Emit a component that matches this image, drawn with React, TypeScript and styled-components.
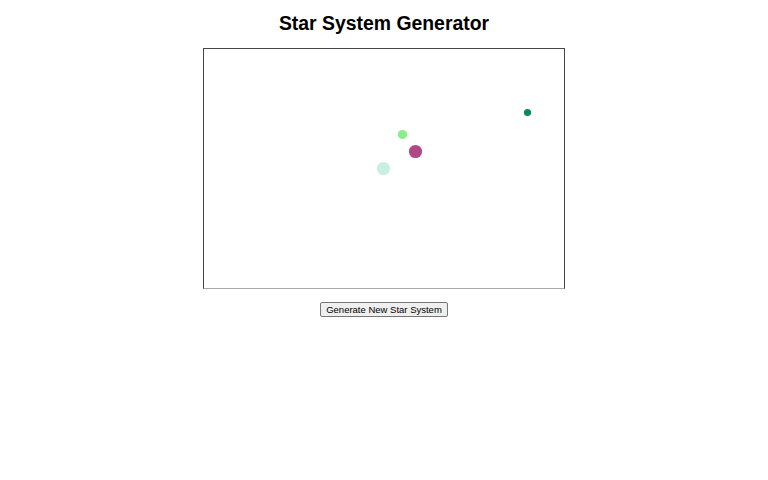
import React from "react";
import styled, { createGlobalStyle } from "styled-components";

const Global = createGlobalStyle`
  html, body { margin: 0; padding: 0; background: #fff; }
  body { font-family: "Liberation Sans", Arial, sans-serif; color: #000; }
`;

const Page = styled.div`
  display: flex;
  flex-direction: column;
  align-items: center;
`;

const Title = styled.h1`
  font-size: 19.4px;
  font-weight: bold;
  line-height: 24px;
  margin: 11px 0 13px;
`;

const Canvas = styled.div`
  width: 360px;
  height: 239px;
  border: 1px solid #444;
  border-bottom-color: #aaa;
  background: #fff;
  overflow: hidden;
`;

const Button = styled.button`
  margin-top: 13px;
  font-family: "Liberation Sans", Arial, sans-serif;
  font-size: 9.5px;
  line-height: 11px;
  padding: 1px 5px;
  background: #efefef;
  border: 1px solid #767676;
  border-radius: 2px;
  color: #000;
`;

type Star = { x: number; y: number; r: number; color: string };

const stars: Star[] = [
  { x: 323.5, y: 63.5, r: 3.6, color: "#0a8a5c" },
  { x: 198.5, y: 85.5, r: 4.6, color: "#88ee88" },
  { x: 211.5, y: 102.5, r: 6.6, color: "#b04888" },
  { x: 179.5, y: 119.5, r: 6.6, color: "#c8efe2" },
];

export default function App() {
  return (
    <>
      <Global />
      <Page>
        <Title>Star System Generator</Title>
        <Canvas>
          <svg width="360" height="240" viewBox="0 0 360 240">
            {stars.map((s, i) => (
              <circle key={i} cx={s.x} cy={s.y} r={s.r} fill={s.color} />
            ))}
          </svg>
        </Canvas>
        <Button>Generate New Star System</Button>
      </Page>
    </>
  );
}
